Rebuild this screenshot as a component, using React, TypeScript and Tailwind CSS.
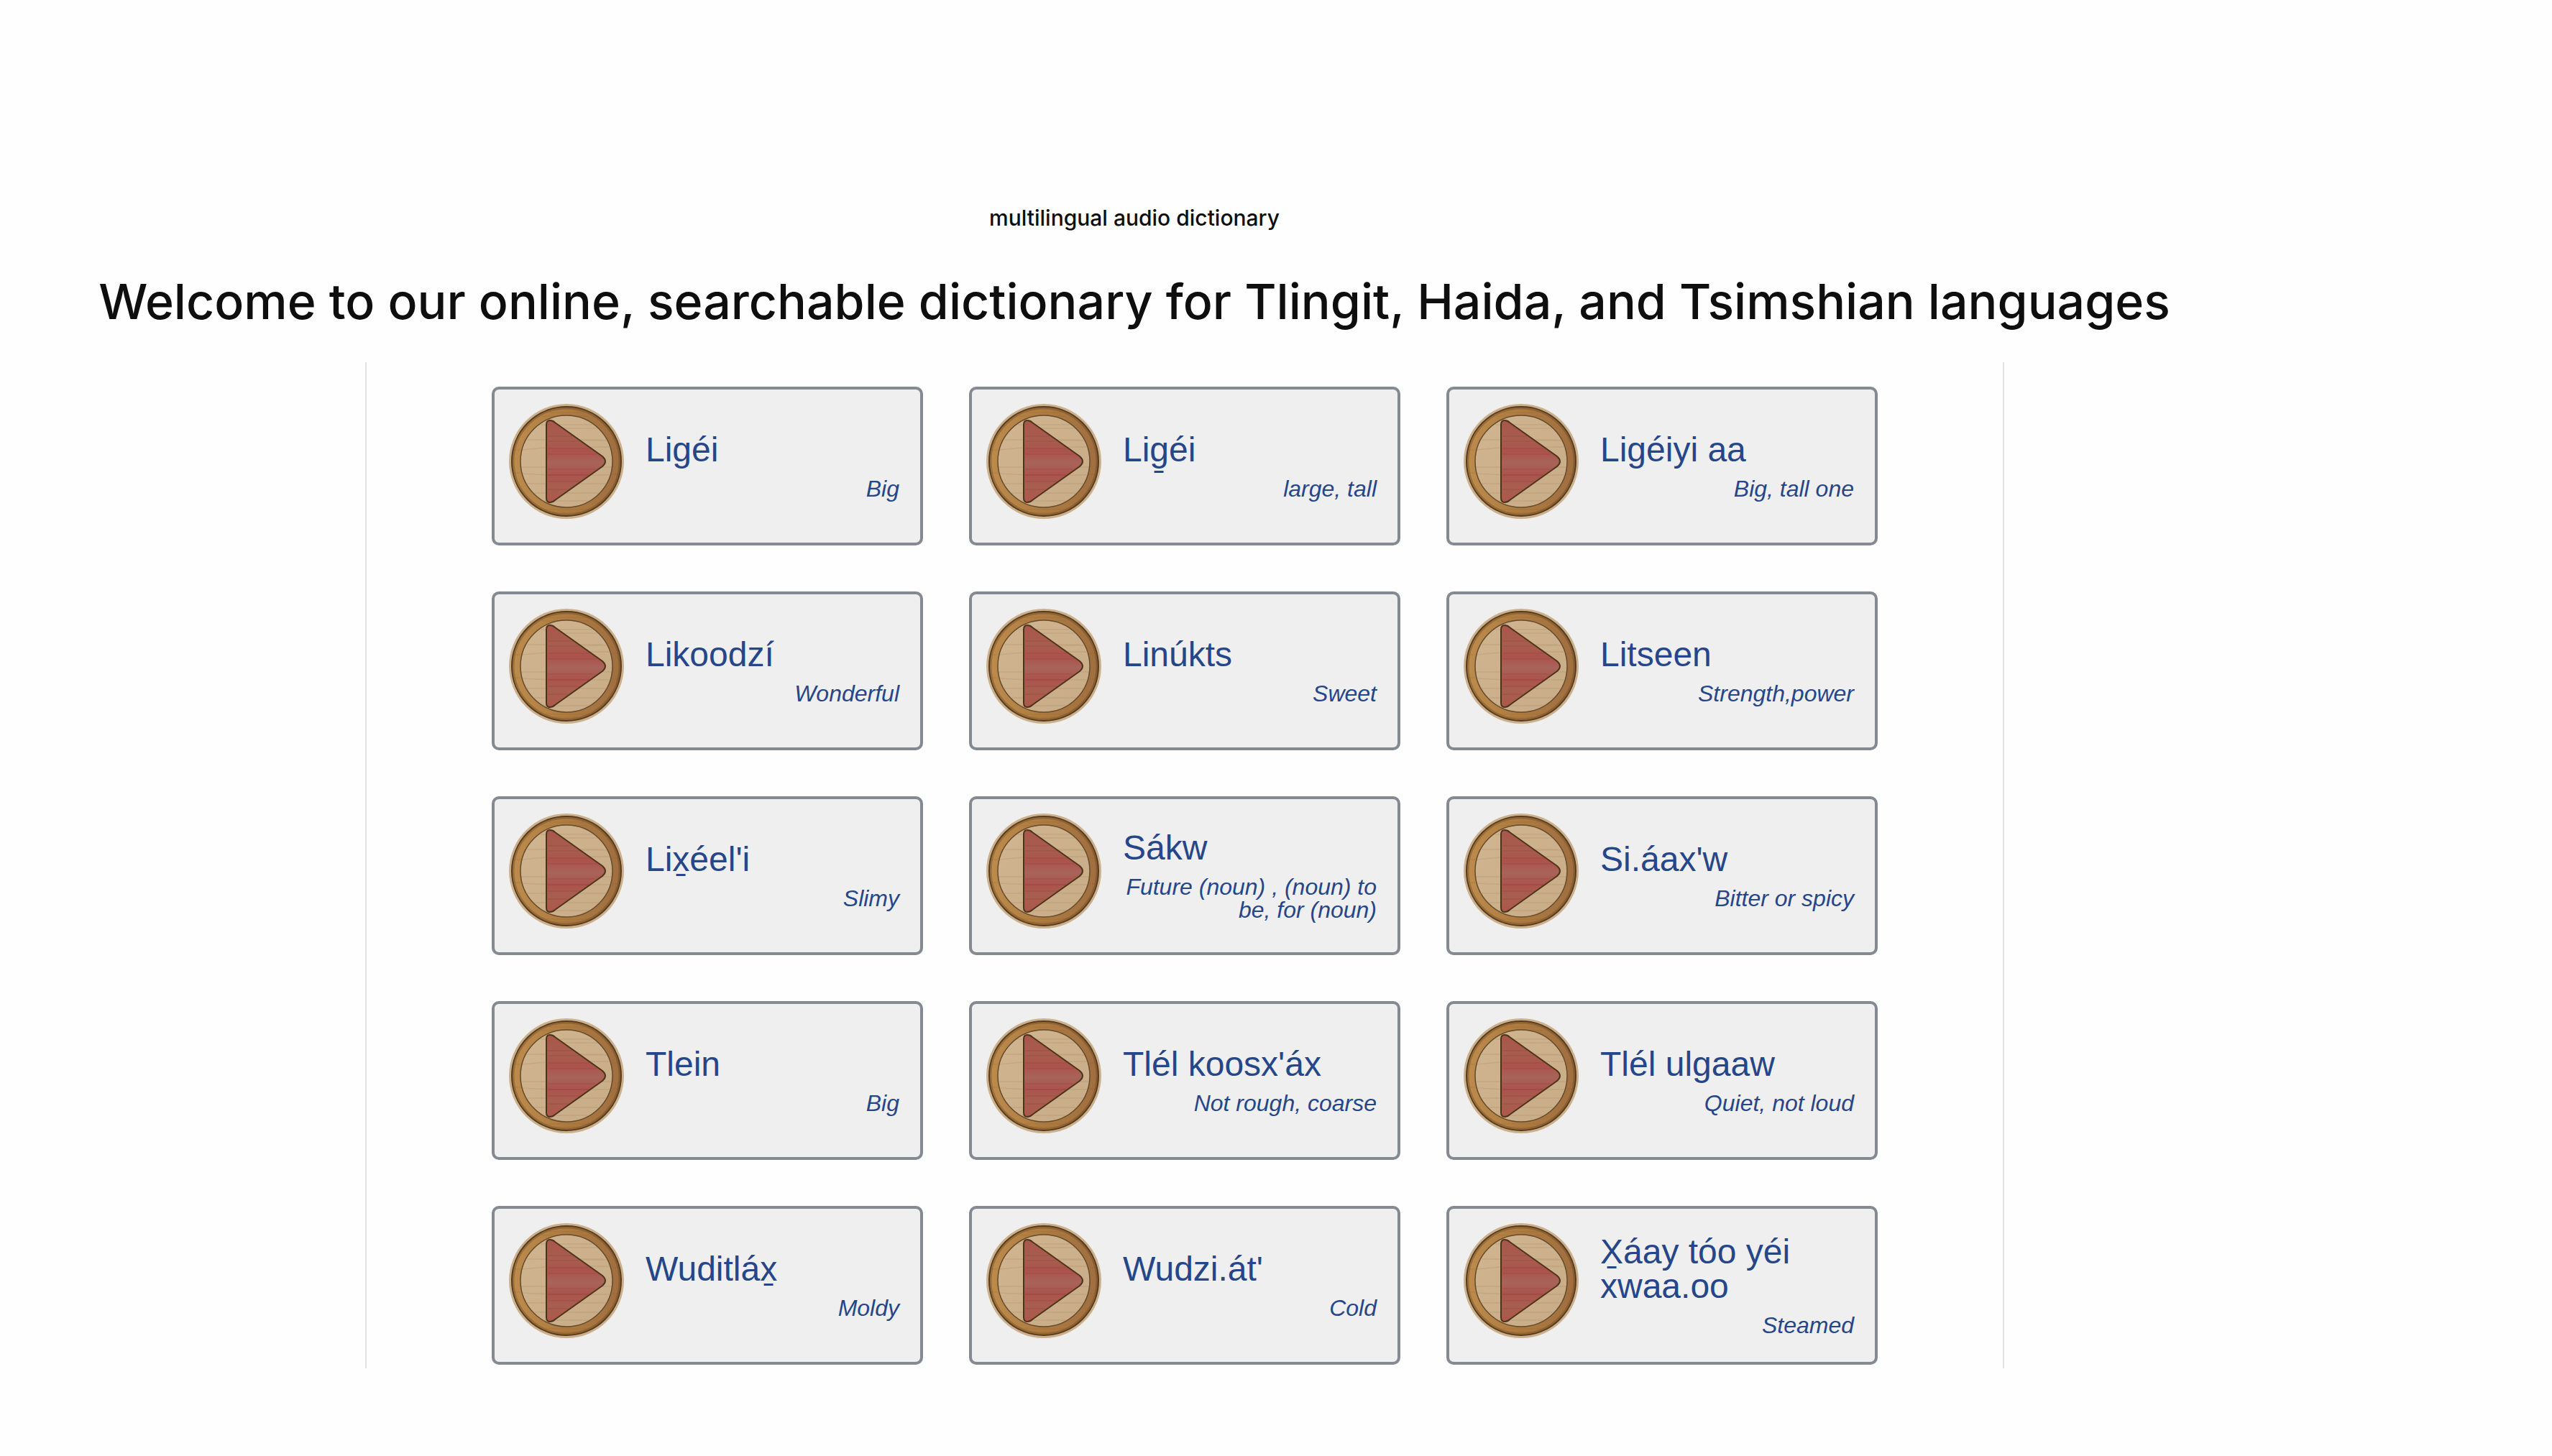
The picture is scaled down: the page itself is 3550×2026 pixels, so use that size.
type Entry = { word: string; meaning: string };

const entries: Entry[] = [
    { word: "Ligéi", meaning: "Big" },
    { word: "Lig\u0331éi", meaning: "large, tall" },
    { word: "Ligéiyi aa", meaning: "Big, tall one" },
    { word: "Likoodzí", meaning: "Wonderful" },
    { word: "Linúkts", meaning: "Sweet" },
    { word: "Litseen", meaning: "Strength,power" },
    { word: "Lix\u0331éel'i", meaning: "Slimy" },
    { word: "Sákw", meaning: "Future (noun) , (noun) to be, for (noun)" },
    { word: "Si.áax'w", meaning: "Bitter or spicy" },
    { word: "Tlein", meaning: "Big" },
    { word: "Tlél koosx'áx", meaning: "Not rough, coarse" },
    { word: "Tlél ulgaaw", meaning: "Quiet, not loud" },
    { word: "Wuditláx\u0331", meaning: "Moldy" },
    { word: "Wudzi.át'", meaning: "Cold" },
    { word: "X\u0331áay tóo yéi xwaa.oo", meaning: "Steamed" },
];

const TRIANGLE = "M52 29 Q52 23 57 23 Q61 23 64 26 L130 73 Q138 80 130 87 L64 134 Q61 137 57 137 Q52 137 52 131 Z";

// Shared gradients, referenced by every play icon
function WoodDefs() {
    return (
        <svg className="absolute h-0 w-0" aria-hidden="true">
            <defs>
                <linearGradient id="rim" x1="0" y1="0" x2="1" y2="0">
                    <stop offset="0" stopColor="#bd8b4c" />
                    <stop offset="0.5" stopColor="#ae7b40" />
                    <stop offset="1" stopColor="#a06e40" />
                </linearGradient>
                <linearGradient id="maple" x1="0" y1="0" x2="1" y2="1">
                    <stop offset="0" stopColor="#d0b591" />
                    <stop offset="1" stopColor="#c8ac87" />
                </linearGradient>
                <linearGradient id="cedar" x1="0" y1="0" x2="0" y2="1">
                    <stop offset="0" stopColor="#a9574a" />
                    <stop offset="0.25" stopColor="#a75d4d" />
                    <stop offset="0.38" stopColor="#ac524b" />
                    <stop offset="0.52" stopColor="#a86459" />
                    <stop offset="0.66" stopColor="#ac534c" />
                    <stop offset="0.8" stopColor="#a85e4e" />
                    <stop offset="1" stopColor="#ad584b" />
                </linearGradient>
            </defs>
        </svg>
    );
}

function PlayIcon() {
    return (
        <svg viewBox="0 0 160 160" className="block h-full w-full" aria-hidden="true">
            <circle cx="80" cy="80" r="80" fill="#cbb08b" />
            <circle cx="80" cy="80" r="76" fill="url(#rim)" stroke="#553c20" strokeWidth="2" />
            <circle cx="80" cy="80" r="74" fill="none" stroke="#5f401c" strokeOpacity="0.35" strokeWidth="3" />
            <g fill="none" stroke="#7d5124" strokeOpacity="0.18">
                <path d="M4 64 H16 M4 96 H16 M144 62 H156 M143 98 H155 M56 12 H104 M46 17 H110 M50 147 H112 M60 151 H100" />
            </g>
            <circle cx="80" cy="80" r="64" fill="url(#maple)" stroke="#654a2c" strokeWidth="1.5" />
            <g fill="none" stroke="#9d7c57" strokeOpacity="0.2" strokeWidth="1.5">
                <path d="M44 29 H116 M66 34 H124 M26 50 H131 M18 64 Q40 62 60 60 H142 M90 51 H136" />
                <path d="M17 88 H143 M18 97 Q36 98 60 99 H140 M22 111 H136 M29 124 H128 M42 135 H117" />
            </g>
            <path d={TRIANGLE} fill="url(#cedar)" />
            <g fill="none" stroke="#7c3a35" strokeOpacity="0.18" strokeWidth="1.5">
                <path d="M54 45 H88 M54 52 H98 M54 62 H112 M54 70 H122 M54 91 H120 M54 108 H99 M54 119 H82" />
            </g>
            <path d="M54 99 H111" fill="none" stroke="#7c3a35" strokeOpacity="0.5" />
            <path d={TRIANGLE} fill="none" stroke="#4d3319" strokeWidth="2" strokeLinejoin="round" />
        </svg>
    );
}

function WordCard({ word, meaning }: Entry) {
    return (
        <li className="flex min-h-[221px] items-center rounded-[10px] border-4 border-[#858992] bg-[#efefef] pr-[29px] pl-5">
            <button type="button" aria-label={`Play ${word}`} className="mt-5 h-40 w-40 shrink-0 cursor-pointer self-start rounded-full">
                <PlayIcon />
            </button>
            <div className="ml-[30px] flex min-w-0 flex-1 flex-col gap-3.5 text-[#26468a]">
                <p className="text-5xl leading-[48px]">{word}</p>
                <p className="text-right text-[32px] leading-8 italic">{meaning}</p>
            </div>
        </li>
    );
}

export default function App() {
    return (
        <div className="min-h-screen bg-[#fefefe]">
            <WoodDefs />
            <header className="pt-[283px] pr-[394px] text-center font-['Inter',sans-serif] font-medium text-[#0e0e0e]">
                <p className="text-[30px] leading-10">multilingual audio dictionary</p>
                <h1 className="mt-14 text-[68px] leading-[80px]">
                    Welcome to our online, searchable dictionary for Tlingit, Haida, and Tsimshian languages
                </h1>
            </header>

            <main className="mt-[45px] mr-[762px] ml-[508px] border-x-2 border-[#e2e2e4] px-[174px] pt-[34px] pb-[5px] font-['Liberation_Sans',Arial,sans-serif]">
                <ul className="grid grid-cols-3 gap-16">
                    {entries.map((entry) => (
                        <WordCard key={entry.word} {...entry} />
                    ))}
                </ul>
            </main>
        </div>
    );
}
